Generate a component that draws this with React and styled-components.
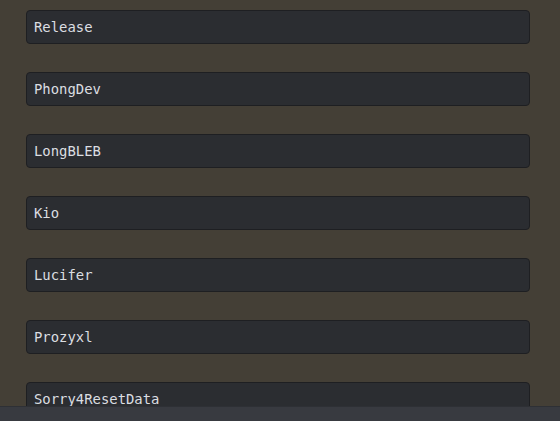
import React from "react";
import styled, { createGlobalStyle } from "styled-components";

const names = [
  "Release",
  "PhongDev",
  "LongBLEB",
  "Kio",
  "Lucifer",
  "Prozyxl",
  "Sorry4ResetData",
];

const App = () => {
  return (
    <Page>
      <GlobalStyle />
      <List>
        {names.map((n) => (
          <Field key={n}>{n}</Field>
        ))}
      </List>
      <BottomBar />
    </Page>
  );
};

export default App;

const GlobalStyle = createGlobalStyle`
  html, body {
    margin: 0;
    padding: 0;
    background: #443f36;
    overflow: hidden;
  }
`;

const Page = styled.div`
  width: 560px;
  height: 421px;
  background: #443f36;
  position: relative;
  overflow: hidden;
`;

const List = styled.div`
  display: flex;
  flex-direction: column;
  gap: 28px;
  padding: 10px 30px 0 26px;
`;

const Field = styled.div`
  height: 34px;
  box-sizing: border-box;
  background: #2b2d31;
  border: 1px solid #1e1f22;
  border-radius: 4px;
  display: flex;
  align-items: center;
  padding-left: 7px;
  font-family: "DejaVu Sans Mono", "Liberation Mono", monospace;
  font-size: 13.9px;
  color: #dbdee1;
  flex-shrink: 0;
`;

const BottomBar = styled.div`
  position: absolute;
  left: 0;
  right: 0;
  bottom: 0;
  height: 14px;
  background: #383a40;
  border-top: 1px solid #2e3035;
`;
